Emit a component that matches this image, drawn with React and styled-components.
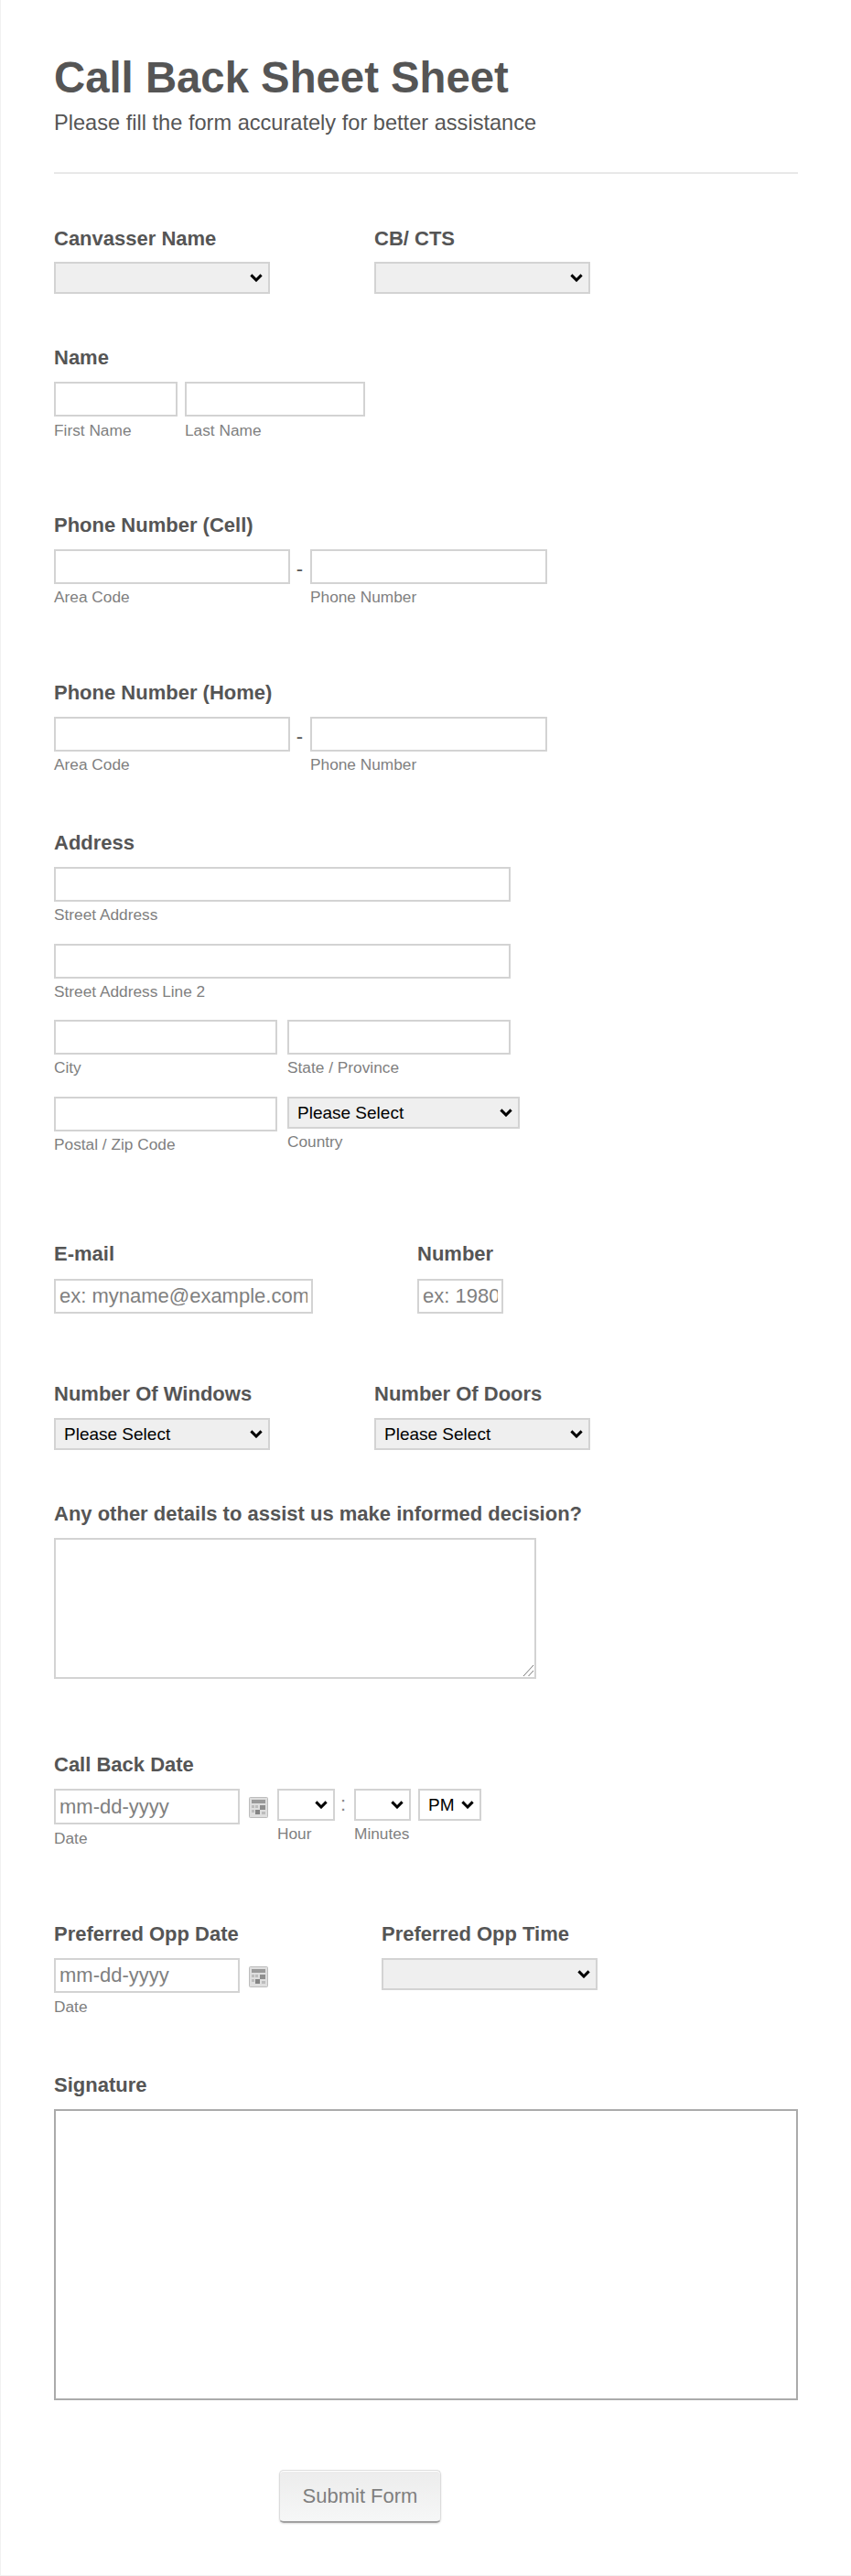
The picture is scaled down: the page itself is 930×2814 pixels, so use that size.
import React from "react";
import styled, { createGlobalStyle } from "styled-components";

const Global = createGlobalStyle`
  html, body { margin: 0; padding: 0; background: #fff; }
  body { font-family: "Liberation Sans", Arial, sans-serif; }
  * { box-sizing: border-box; }
`;

const chevron =
  "data:image/svg+xml;utf8," +
  encodeURIComponent(
    '<svg xmlns="http://www.w3.org/2000/svg" width="14" height="9" viewBox="0 0 14 9"><path d="M1.4 1.4 L7 7 L12.6 1.4" fill="none" stroke="#000" stroke-width="3"/></svg>'
  );

const Page = styled.form`
  width: 930px;
  height: 2814px;
  overflow: hidden;
  padding: 58px 0 0 58px;
  border-left: 1px solid #f1f1f1;
  border-bottom: 1px solid #f1f1f1;
  margin: 0;
`;
const Header = styled.header`
  border-bottom: 2px solid #e8e8e8;
  height: 132px;
  width: 813px;
`;
const Title = styled.h1`
  margin: 0;
  font-size: 47.3px;
  line-height: 53px;
  font-weight: 700;
  color: #555;
`;
const Subtitle = styled.div`
  margin-top: 8px;
  font-size: 23.6px;
  line-height: 30px;
  color: #555;
`;
const Row = styled.div`
  display: flex;
  margin-top: ${(p) => p.$top}px;
`;
const Controls = styled.div`
  display: flex;
  gap: ${(p) => p.$gap || 0}px;
  margin-top: ${(p) => p.$top || 0}px;
`;
const Field = styled.div`
  width: ${(p) => (p.$w ? `${p.$w}px` : "auto")};
  margin-left: ${(p) => p.$left || 0}px;
  flex: none;
`;
const Label = styled.div`
  font-size: 22px;
  line-height: 26px;
  font-weight: 700;
  color: #555;
  margin-bottom: ${(p) => p.$mb ?? 13}px;
  white-space: nowrap;
`;
const Text = styled.input`
  display: block;
  width: ${(p) => p.$w}px;
  height: ${(p) => p.$h || 38}px;
  border: 2px solid #d3d3d3;
  background: #fff;
  margin: ${(p) => p.$top || 0}px 0 0;
  padding: 0 4px;
  font: 22px "Liberation Sans", Arial, sans-serif;
  color: #555;
  border-radius: 0;
  outline: none;
  &::placeholder { color: #808080; opacity: 1; }
`;
const Select = styled.select`
  display: block;
  appearance: none;
  -webkit-appearance: none;
  width: ${(p) => p.$w}px;
  height: 35px;
  border: 2px solid #d3d3d3;
  background-color: ${(p) => (p.$plain ? "#fff" : "#efefef")};
  background-image: url("${chevron}");
  background-repeat: no-repeat;
  background-position: right 6px center;
  background-size: 14px 9px;
  margin: 0;
  padding: 0 0 0 9px;
  font: 19px "Liberation Sans", Arial, sans-serif;
  color: #000;
  border-radius: 0;
  outline: none;
`;
const Sub = styled.div`
  font-size: 17.3px;
  line-height: 20px;
  color: #7f7f7f;
  margin-top: ${(p) => p.$top ?? 4}px;
  white-space: nowrap;
`;
const Dash = styled.span`
  flex: none;
  width: 21px;
  padding-top: 3px;
  text-align: center;
  font-size: 22px;
  line-height: 38px;
  color: #555;
`;
const Colon = styled.span`
  flex: none;
  width: 21px;
  padding-right: 3px;
  text-align: center;
  font-size: 22px;
  line-height: 34px;
  color: #8a8a8a;
`;
const AreaWrap = styled.div`
  position: relative;
  width: 527px;
  height: 154px;
`;
const Area = styled.textarea`
  display: block;
  width: 527px;
  height: 154px;
  border: 2px solid #d3d3d3;
  background: #fff;
  margin: 0;
  outline: none;
  resize: none;
  border-radius: 0;
`;
const Grip = styled.svg`
  position: absolute;
  right: 2px;
  bottom: 2px;
  width: 13px;
  height: 14px;
`;
const Sig = styled.div`
  width: 813px;
  height: 318px;
  border: 2px solid #ababab;
  background: #fff;
`;
const SubmitRow = styled.div`
  display: flex;
  margin-top: 76px;
  padding-left: 246px;
`;
const Submit = styled.button`
  width: 177px;
  height: 58px;
  border: 1px solid #dcdcdc;
  border-bottom: 2px solid #a0a0a0;
  border-radius: 5px;
  background: linear-gradient(#ececec, #f6f7f7);
  box-shadow: inset 0 1px 0 #fff, 0 1px 2px #ddd;
  font: 22px "Liberation Sans", Arial, sans-serif;
  color: #7f7f7f;
  padding: 0;
`;
const CalWrap = styled.span`
  flex: none;
  display: block;
  width: 21px;
  height: 23px;
  margin: 9px 10px 0 10px;
`;

const Cal = () => (
  <CalWrap>
    <svg width="21" height="23" viewBox="0 0 21 23">
      <rect x="0.5" y="0.5" width="20" height="22" rx="1" fill="#dedede" stroke="#bdbdbd" />
      <rect x="3" y="3" width="15" height="4" fill="#9a9a9a" />
      <rect x="3" y="9" width="3" height="3" fill="#bcbcbc" />
      <rect x="7" y="9" width="3" height="3" fill="#bcbcbc" />
      <rect x="12" y="9" width="6" height="5" fill="#8f8f8f" />
      <rect x="7" y="14" width="5" height="5" fill="#858585" />
      <rect x="3" y="14" width="3" height="3" fill="#bcbcbc" />
      <rect x="14" y="16" width="4" height="3" fill="#bcbcbc" />
    </svg>
  </CalWrap>
);

const Opt = ({ t }) => <option>{t}</option>;

const Phone = ({ label, top }) => (
  <Row $top={top}>
    <Field>
      <Label>{label}</Label>
      <Controls>
        <Field><Text $w={258} /><Sub>Area Code</Sub></Field>
        <Dash>-</Dash>
        <Field $left={1}><Text $w={259} /><Sub>Phone Number</Sub></Field>
      </Controls>
    </Field>
  </Row>
);

export default function App() {
  return (
    <Page onSubmit={(e) => e.preventDefault()}>
      <Global />
      <Header>
        <Title>Call Back Sheet Sheet</Title>
        <Subtitle>Please fill the form accurately for better assistance</Subtitle>
      </Header>

      <Row $top={58}>
        <Field $w={350}>
          <Label $mb={12}>Canvasser Name</Label>
          <Select $w={236}><Opt t="" /></Select>
        </Field>
        <Field>
          <Label $mb={12}>CB/ CTS</Label>
          <Select $w={236}><Opt t="" /></Select>
        </Field>
      </Row>

      <Row $top={57}>
        <Field>
          <Label>Name</Label>
          <Controls $gap={8}>
            <Field><Text $w={135} /><Sub $top={5}>First Name</Sub></Field>
            <Field><Text $w={197} /><Sub $top={5}>Last Name</Sub></Field>
          </Controls>
        </Field>
      </Row>

      <Phone label="Phone Number (Cell)" top={81} />
      <Phone label="Phone Number (Home)" top={82} />

      <Row $top={63}>
        <Field>
          <Label>Address</Label>
          <Text $w={499} />
          <Sub>Street Address</Sub>
          <Text $w={499} $top={22} />
          <Sub>Street Address Line 2</Sub>
          <Controls $top={21} $gap={11}>
            <Field><Text $w={244} /><Sub>City</Sub></Field>
            <Field><Text $w={244} /><Sub>State / Province</Sub></Field>
          </Controls>
          <Controls $top={22} $gap={11}>
            <Field><Text $w={244} /><Sub>Postal / Zip Code</Sub></Field>
            <Field><Select $w={254}><Opt t="Please Select" /></Select><Sub>Country</Sub></Field>
          </Controls>
        </Field>
      </Row>

      <Row $top={97}>
        <Field $w={397}>
          <Label $mb={14}>E-mail</Label>
          <Text $w={283} placeholder="ex: myname@example.com" />
        </Field>
        <Field>
          <Label $mb={14}>Number</Label>
          <Text $w={94} placeholder="ex: 1980" />
        </Field>
      </Row>

      <Row $top={75}>
        <Field $w={350}>
          <Label>Number Of Windows</Label>
          <Select $w={236}><Opt t="Please Select" /></Select>
        </Field>
        <Field>
          <Label>Number Of Doors</Label>
          <Select $w={236}><Opt t="Please Select" /></Select>
        </Field>
      </Row>

      <Row $top={57}>
        <Field>
          <Label>Any other details to assist us make informed decision?</Label>
          <AreaWrap>
            <Area />
            <Grip viewBox="0 0 13 14">
              <path d="M12 1 L1 13 M12 7 L6.5 13" fill="none" stroke="#777" strokeWidth="1" />
            </Grip>
          </AreaWrap>
        </Field>
      </Row>

      <Row $top={81}>
        <Field>
          <Label>Call Back Date</Label>
          <Controls>
            <Field><Text $w={203} $h={39} placeholder="mm-dd-yyyy" /><Sub $top={5}>Date</Sub></Field>
            <Cal />
            <Field $w={63}><Select $w={63} $plain><Opt t="" /></Select><Sub>Hour</Sub></Field>
            <Colon>:</Colon>
            <Field $w={62}><Select $w={62} $plain><Opt t="" /></Select><Sub>Minutes</Sub></Field>
            <Field $w={69} $left={8}><Select $w={69} $plain><Opt t="PM" /></Select></Field>
          </Controls>
        </Field>
      </Row>

      <Row $top={82}>
        <Field $w={358}>
          <Label>Preferred Opp Date</Label>
          <Controls>
            <Field><Text $w={203} placeholder="mm-dd-yyyy" /><Sub $top={5}>Date</Sub></Field>
            <Cal />
          </Controls>
        </Field>
        <Field>
          <Label>Preferred Opp Time</Label>
          <Select $w={236}><Opt t="" /></Select>
        </Field>
      </Row>

      <Row $top={63}>
        <Field>
          <Label>Signature</Label>
          <Sig />
        </Field>
      </Row>

      <SubmitRow>
        <Submit type="submit">Submit Form</Submit>
      </SubmitRow>
    </Page>
  );
}
